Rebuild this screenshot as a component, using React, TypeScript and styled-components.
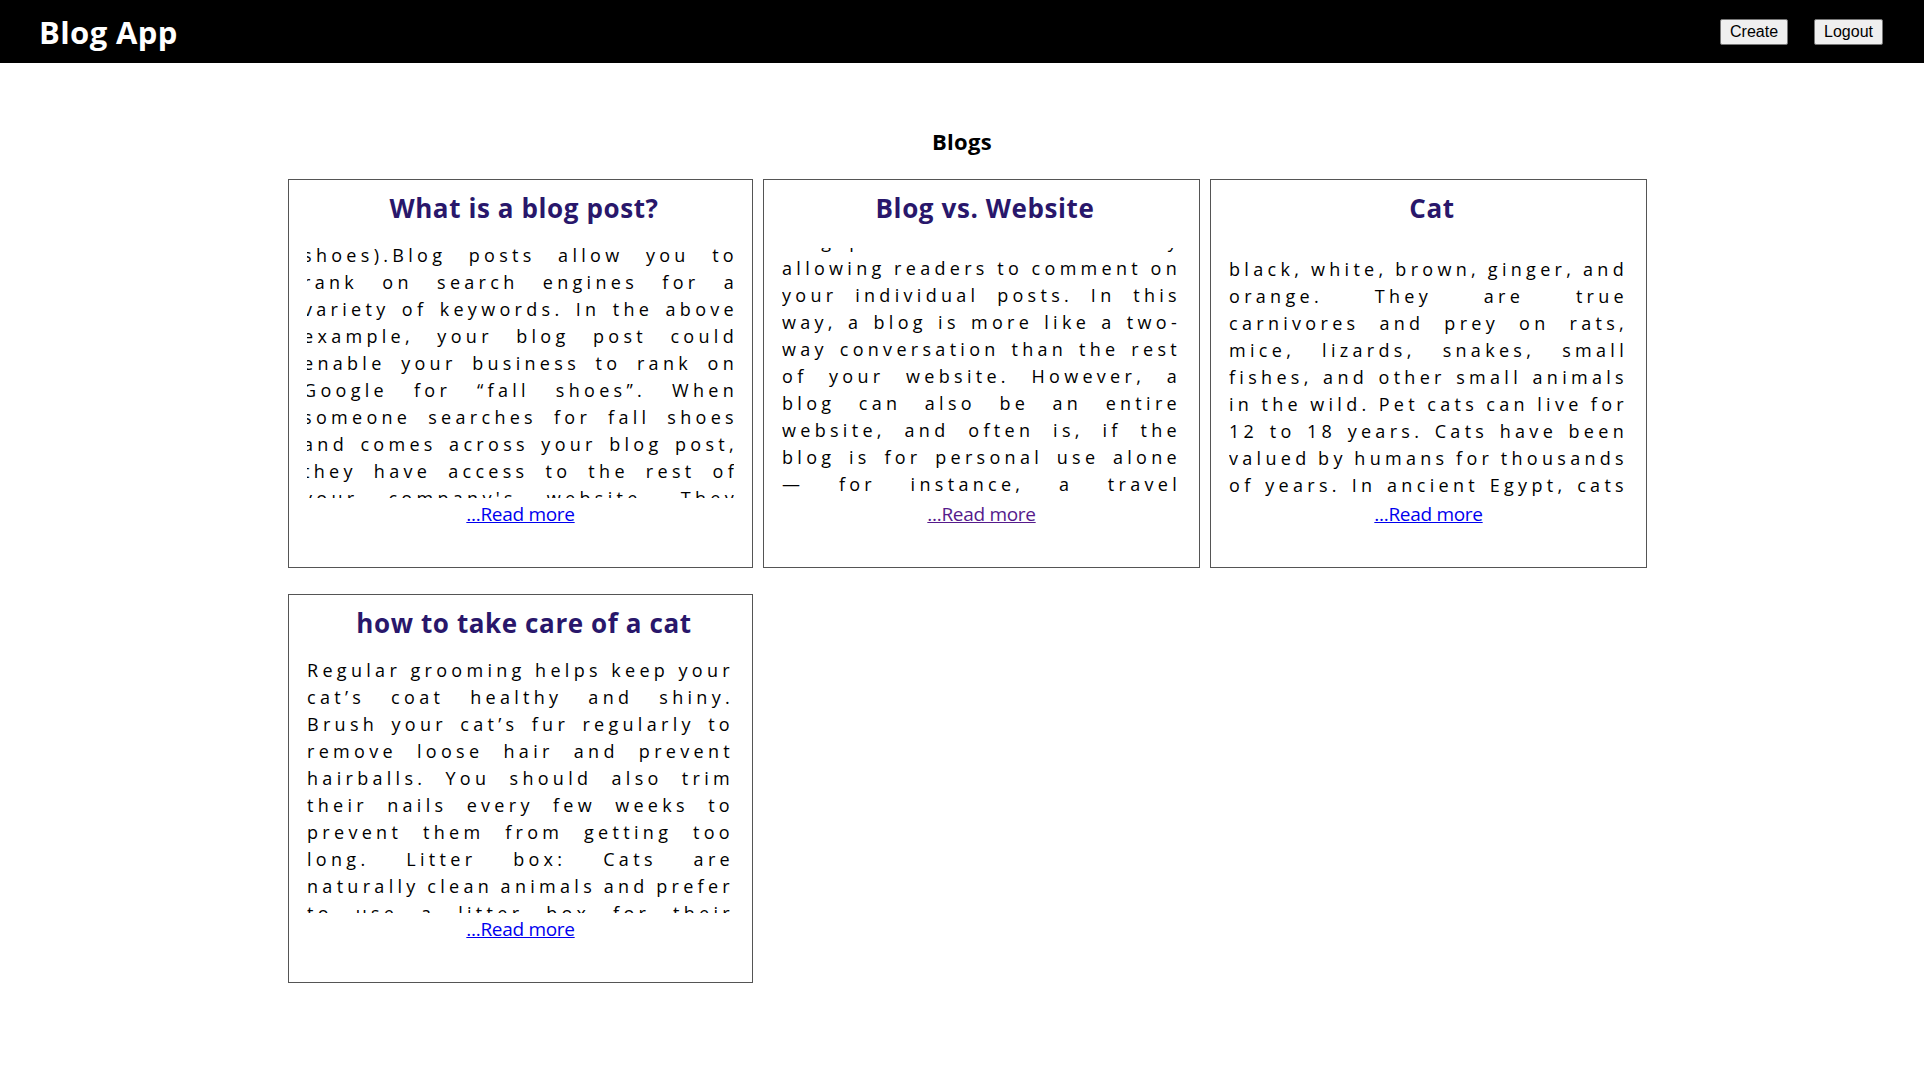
import React from "react";
import styled, { createGlobalStyle } from "styled-components";

const GlobalStyle = createGlobalStyle`
  html, body { margin: 0; padding: 0; background: #ffffff; }
  body { font-family: "Open Sans", "Noto Sans", sans-serif; color: #000; }
  * { box-sizing: border-box; }
`;

const NavBar = styled.header`
  height: 63px;
  background: #000000;
  display: flex;
  align-items: center;
  justify-content: space-between;
  padding: 0 41px 0 39px;
`;

const Brand = styled.h1`
  margin: 0;
  color: #ffffff;
  font-size: 31px;
  font-weight: 700;
  line-height: 40px;
  letter-spacing: 0.4px;
`;

const NavActions = styled.div`
  display: flex;
  align-items: center;
  gap: 26px;
`;

const NavButton = styled.button`
  font-family: "Liberation Sans", Arial, sans-serif;
  font-size: 16px;
  line-height: 18px;
  height: 26px;
  padding: 3px 9px;
  background: #efefef;
  color: #000;
  border: 1px solid #767676;
  border-radius: 2px;
  cursor: pointer;
`;

const Main = styled.main`
  padding: 63px 0 80px 288px;
`;

const PageTitle = styled.h2`
  margin: 0 0 23px -288px;
  text-align: center;
  font-size: 22px;
  line-height: 30px;
  font-weight: 700;
  letter-spacing: 0.3px;
`;

const Grid = styled.div`
  display: grid;
  grid-template-columns: 465px 437px 437px;
  column-gap: 10px;
  row-gap: 26px;
  align-items: start;
`;

const Card = styled.article`
  height: 389px;
  border: 1px solid #555555;
  padding-top: 10px;
  display: flex;
  flex-direction: column;
`;

const CardTitle = styled.h3`
  margin: 0;
  padding-left: 7px;
  text-align: center;
  font-size: 26px;
  line-height: 36px;
  font-weight: 700;
  color: #29176b;
  letter-spacing: 0.6px;
`;

const TextBox = styled.div`
  margin: 22px 18px 0;
  height: 250px;
  overflow: hidden;
`;

const TextFlow = styled.div<{ $offset: number; $bleed: number }>`
  margin: 0 ${(p) => -p.$bleed}px;
  transform: translateY(${(p) => p.$offset}px);
  font-size: 18px;
  line-height: 27px;
  letter-spacing: 4.3px;
  word-spacing: -2px;
  color: #000;
`;

const Line = styled.span`
  display: block;
  text-align: justify;
  text-align-last: justify;
  white-space: nowrap;
`;

const LinkRow = styled.div`
  margin-top: 3px;
  text-align: center;
  font-size: 19px;
  line-height: 27px;
  letter-spacing: -0.3px;
`;

const ReadMore = styled.a<{ $visited?: boolean }>`
  color: ${(p) => (p.$visited ? "#551a8b" : "#0000ee")};
  text-decoration: underline;
`;

type Post = {
  title: string;
  lines: string[];
  offset: number;
  bleed: number;
  visited?: boolean;
};

const posts: Post[] = [
  {
    title: "What is a blog post?",
    offset: -6.5,
    bleed: 4,
    lines: [
      "shoes).Blog posts allow you to",
      "rank on search engines for a",
      "variety of keywords. In the above",
      "example, your blog post could",
      "enable your business to rank on",
      "Google for \u201cfall shoes\u201d. When",
      "someone searches for fall shoes",
      "and comes across your blog post,",
      "they have access to the rest of",
      "your company's website. They",
    ],
  },
  {
    title: "Blog vs. Website",
    offset: -20.5,
    bleed: 0,
    visited: true,
    lines: [
      "blog posts invite comments by",
      "allowing readers to comment on",
      "your individual posts. In this",
      "way, a blog is more like a two-",
      "way conversation than the rest",
      "of your website. However, a",
      "blog can also be an entire",
      "website, and often is, if the",
      "blog is for personal use alone",
      "\u2014 for instance, a travel",
      "blog or a food blog. Blogs",
    ],
  },
  {
    title: "Cat",
    offset: 7.5,
    bleed: 0,
    lines: [
      "black, white, brown, ginger, and",
      "orange. They are true",
      "carnivores and prey on rats,",
      "mice, lizards, snakes, small",
      "fishes, and other small animals",
      "in the wild. Pet cats can live for",
      "12 to 18 years. Cats have been",
      "valued by humans for thousands",
      "of years. In ancient Egypt, cats",
      "were worshipped as sacred",
    ],
  },
  {
    title: "how to take care of a cat",
    offset: -6.5,
    bleed: 0,
    lines: [
      "Regular grooming helps keep your",
      "cat\u2019s coat healthy and shiny.",
      "Brush your cat\u2019s fur regularly to",
      "remove loose hair and prevent",
      "hairballs. You should also trim",
      "their nails every few weeks to",
      "prevent them from getting too",
      "long. Litter box: Cats are",
      "naturally clean animals and prefer",
      "to use a litter box for their",
    ],
  },
];

export default function App() {
  return (
    <>
      <GlobalStyle />
      <NavBar>
        <Brand>Blog App</Brand>
        <NavActions>
          <NavButton>Create</NavButton>
          <NavButton>Logout</NavButton>
        </NavActions>
      </NavBar>
      <Main>
        <PageTitle>Blogs</PageTitle>
        <Grid>
          {posts.map((post) => (
            <Card key={post.title}>
              <CardTitle>{post.title}</CardTitle>
              <TextBox>
                <TextFlow $offset={post.offset} $bleed={post.bleed}>
                  {post.lines.map((line, i) => (
                    <Line key={i}>{line}</Line>
                  ))}
                </TextFlow>
              </TextBox>
              <LinkRow>
                <ReadMore href="#" $visited={post.visited}>
                  ...Read more
                </ReadMore>
              </LinkRow>
            </Card>
          ))}
        </Grid>
      </Main>
    </>
  );
}
